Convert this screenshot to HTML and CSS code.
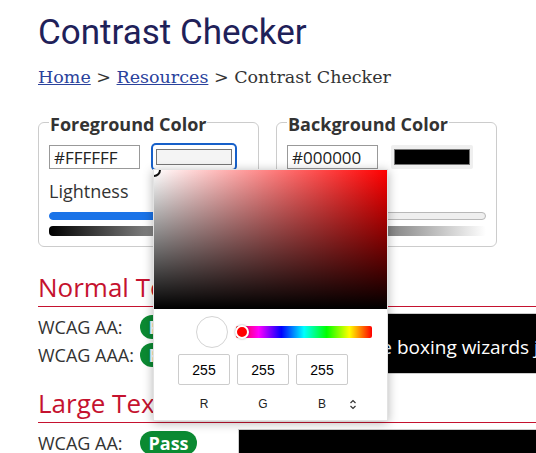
FILE: index.html
```html
<!DOCTYPE html>
<html lang="en">
<head>
    <meta charset="UTF-8">
    <meta name="viewport" content="width=device-width, initial-scale=1.0">
    <title>Contrast Checker</title>
    <link rel="stylesheet" href="styles.css">
</head>
<body>

    <div class="page">
        <h1 class="title">Contrast Checker</h1>
        <p class="crumbs"><a href="#">Home</a> &gt; <a href="#">Resources</a> &gt; Contrast Checker</p>

        <div class="pickers">
            <fieldset class="picker">
                <legend>Foreground Color</legend>
                <div class="picker-row">
                    <input class="hex" type="text" value="#FFFFFF">
                    <div class="swatch-wrap">
                        <span class="swatch focused"><span class="swatch-fill white"></span></span>

                        <!-- open colour popup -->
                        <div class="popup">
                            <div class="sat-box">
                                <span class="sat-thumb"></span>
                            </div>
                            <div class="popup-row">
                                <span class="preview"></span>
                                <div class="hue">
                                    <span class="hue-thumb"></span>
                                </div>
                            </div>
                            <div class="rgb-inputs">
                                <input type="text" value="255">
                                <input type="text" value="255">
                                <input type="text" value="255">
                            </div>
                            <div class="rgb-labels">
                                <span>R</span>
                                <span>G</span>
                                <span>B</span>
                                <svg class="format-toggle" width="8" height="11" viewBox="0 0 8 11">
                                    <path d="M1.5 4 L4 1.5 L6.5 4 M1.5 7 L4 9.5 L6.5 7" fill="none" stroke="#333" stroke-width="1.2"/>
                                </svg>
                            </div>
                        </div>
                    </div>
                </div>
                <label class="light-label">Lightness</label>
                <div class="track full"></div>
                <div class="ramp"></div>
            </fieldset>

            <fieldset class="picker">
                <legend>Background Color</legend>
                <div class="picker-row">
                    <input class="hex" type="text" value="#000000">
                    <div class="swatch-wrap">
                        <span class="swatch"><span class="swatch-fill black"></span></span>
                    </div>
                </div>
                <label class="light-label">Lightness</label>
                <div class="track"></div>
                <div class="ramp"></div>
            </fieldset>
        </div>

        <section class="result">
            <h2>Normal Text</h2>
            <div class="result-body">
                <div class="checks">
                    <div class="check"><span class="check-label">WCAG AA:</span><span class="pass">Pass</span></div>
                    <div class="check"><span class="check-label">WCAG AAA:</span><span class="pass">Pass</span></div>
                </div>
                <div class="sample">The five boxing wizards jump quickly.</div>
            </div>
        </section>

        <section class="result">
            <h2>Large Text</h2>
            <div class="result-body">
                <div class="checks">
                    <div class="check"><span class="check-label">WCAG AA:</span><span class="pass">Pass</span></div>
                    <div class="check"><span class="check-label">WCAG AAA:</span><span class="pass">Pass</span></div>
                </div>
                <div class="sample large">The five boxing wizards jump quickly.</div>
            </div>
        </section>
    </div>

</body>
</html>
```

FILE: styles.css
```css
* {
    margin: 0;
    padding: 0;
    box-sizing: border-box;
}

html, body {
    overflow: hidden;
}

body {
    background: #fff;
    font-family: "Open Sans", Arial, sans-serif;
    color: #333;
}

.page {
    width: 800px;
    padding: 12px 0 0 38px;
}

.title {
    font-family: Roboto, Arial, sans-serif;
    font-weight: 400;
    font-size: 35px;
    line-height: 42px;
    color: #1f2159;
}

.crumbs {
    font-family: "DejaVu Serif", "Liberation Serif", serif;
    font-size: 17.5px;
    line-height: 24px;
    margin-top: 11px;
    color: #333;
}

.crumbs a {
    color: #2a429c;
}

/* colour pickers */
.pickers {
    display: flex;
    gap: 17px;
    margin-top: 21px;
}

.picker {
    width: 221px;
    border: 1px solid #ccc;
    border-radius: 6px;
    padding: 11px 10px 10px;
}

.picker legend {
    font-weight: 700;
    font-size: 18px;
    line-height: 20px;
    padding: 4px 1px 0;
    color: #333;
}

.picker-row {
    display: flex;
    align-items: center;
    gap: 13px;
}

.hex {
    width: 91px;
    height: 24px;
    border: 1px solid #999;
    padding: 0 4px;
    font-family: "Open Sans", Arial, sans-serif;
    font-size: 17px;
    color: #222;
    outline: none;
}

.swatch-wrap {
    position: relative;
}

.swatch {
    display: block;
    width: 82px;
    height: 24px;
    background: #efefef;
    padding: 4px 3px;
    border-radius: 2px;
}

.swatch.focused {
    background: #fff;
    box-shadow: 0 0 0 2px #1760c9;
    border-radius: 3px;
}

.swatch-fill {
    display: block;
    height: 16px;
    border: 1px solid #777;
}

.swatch-fill.white {
    background: #f4f4f4;
}

.swatch-fill.black {
    background: #000;
}

.light-label {
    display: block;
    font-size: 18px;
    line-height: 24px;
    margin-top: 10px;
}

.track {
    height: 8px;
    margin-top: 9px;
    border-radius: 4px;
    background: #efefef;
    border: 1px solid #b8b8b8;
}

.track.full {
    background: #1a73e8;
    border-color: #1a73e8;
}

.ramp {
    height: 10px;
    margin-top: 6px;
    border-radius: 4px;
    background: linear-gradient(to right, #000, #fff);
}

/* results */
.result h2 {
    font-weight: 400;
    font-size: 26px;
    line-height: 31px;
    color: #c5122f;
    padding-bottom: 3px;
    border-bottom: 1px solid #c5122f;
}

.result {
    margin-top: 25px;
}

.result + .result {
    margin-top: 14px;
}

.result-body {
    display: flex;
    padding-top: 6px;
}

.checks {
    width: 200px;
    flex-shrink: 0;
}

.check {
    display: flex;
    align-items: center;
    height: 28px;
}

.check-label {
    width: 102px;
    font-size: 18px;
}

.pass {
    display: inline-block;
    width: 57px;
    height: 24px;
    line-height: 24px;
    border-radius: 12px;
    background: #0b8a32;
    color: #fff;
    font-weight: 700;
    font-size: 18px;
    text-align: center;
}

.sample {
    width: 498px;
    height: 61px;
    padding-top: 6px;
    background: #000;
    border: 1px solid #ccc;
    color: #fff;
    font-size: 19px;
    display: flex;
    align-items: center;
    justify-content: center;
}

.sample.large {
    height: 110px;
    font-size: 24px;
    font-weight: 700;
}

/* colour popup */
.popup {
    position: absolute;
    top: 24px;
    left: 0;
    z-index: 10;
    width: 235px;
    height: 252px;
    background: #fff;
    border: 1px solid #e2e2e2;
    box-shadow: 0 2px 10px rgba(0, 0, 0, 0.3);
    font-family: "Liberation Sans", Arial, sans-serif;
}

.sat-box {
    position: relative;
    height: 139px;
    overflow: hidden;
    background: linear-gradient(to top, #000, rgba(0, 0, 0, 0)), linear-gradient(to right, #fff, #f00);
}

.sat-thumb {
    position: absolute;
    top: -7px;
    left: -7px;
    width: 14px;
    height: 14px;
    border-radius: 50%;
    border: 2px solid #111;
    background: #fff;
}

.popup-row {
    display: flex;
    align-items: center;
    gap: 8px;
    padding: 7px 0 0 42px;
}

.preview {
    width: 32px;
    height: 32px;
    border-radius: 50%;
    border: 1px solid #d4d4d4;
    background: #fff;
}

.hue {
    position: relative;
    width: 136px;
    height: 12px;
    border-radius: 2px;
    background: linear-gradient(to right, #f00, #f0f, #00f, #0ff, #0f0, #ff0, #f00);
}

.hue-thumb {
    position: absolute;
    top: -1px;
    left: -1px;
    width: 14px;
    height: 14px;
    border-radius: 50%;
    background: #f00;
    border: 2px solid #fff;
    box-shadow: 0 0 2px rgba(0, 0, 0, 0.4);
}

.rgb-inputs {
    display: flex;
    gap: 7px;
    padding: 6px 0 0 24px;
}

.rgb-inputs input {
    width: 52px;
    height: 31px;
    border: 1px solid #ccc;
    border-radius: 2px;
    text-align: center;
    font-family: "Liberation Sans", Arial, sans-serif;
    font-size: 14px;
    color: #000;
    outline: none;
}

.rgb-labels {
    display: flex;
    align-items: center;
    gap: 7px;
    padding: 12px 0 0 24px;
    font-size: 12px;
    color: #222;
}

.rgb-labels span {
    width: 52px;
    text-align: center;
}

.format-toggle {
    margin-left: -6px;
}
```
